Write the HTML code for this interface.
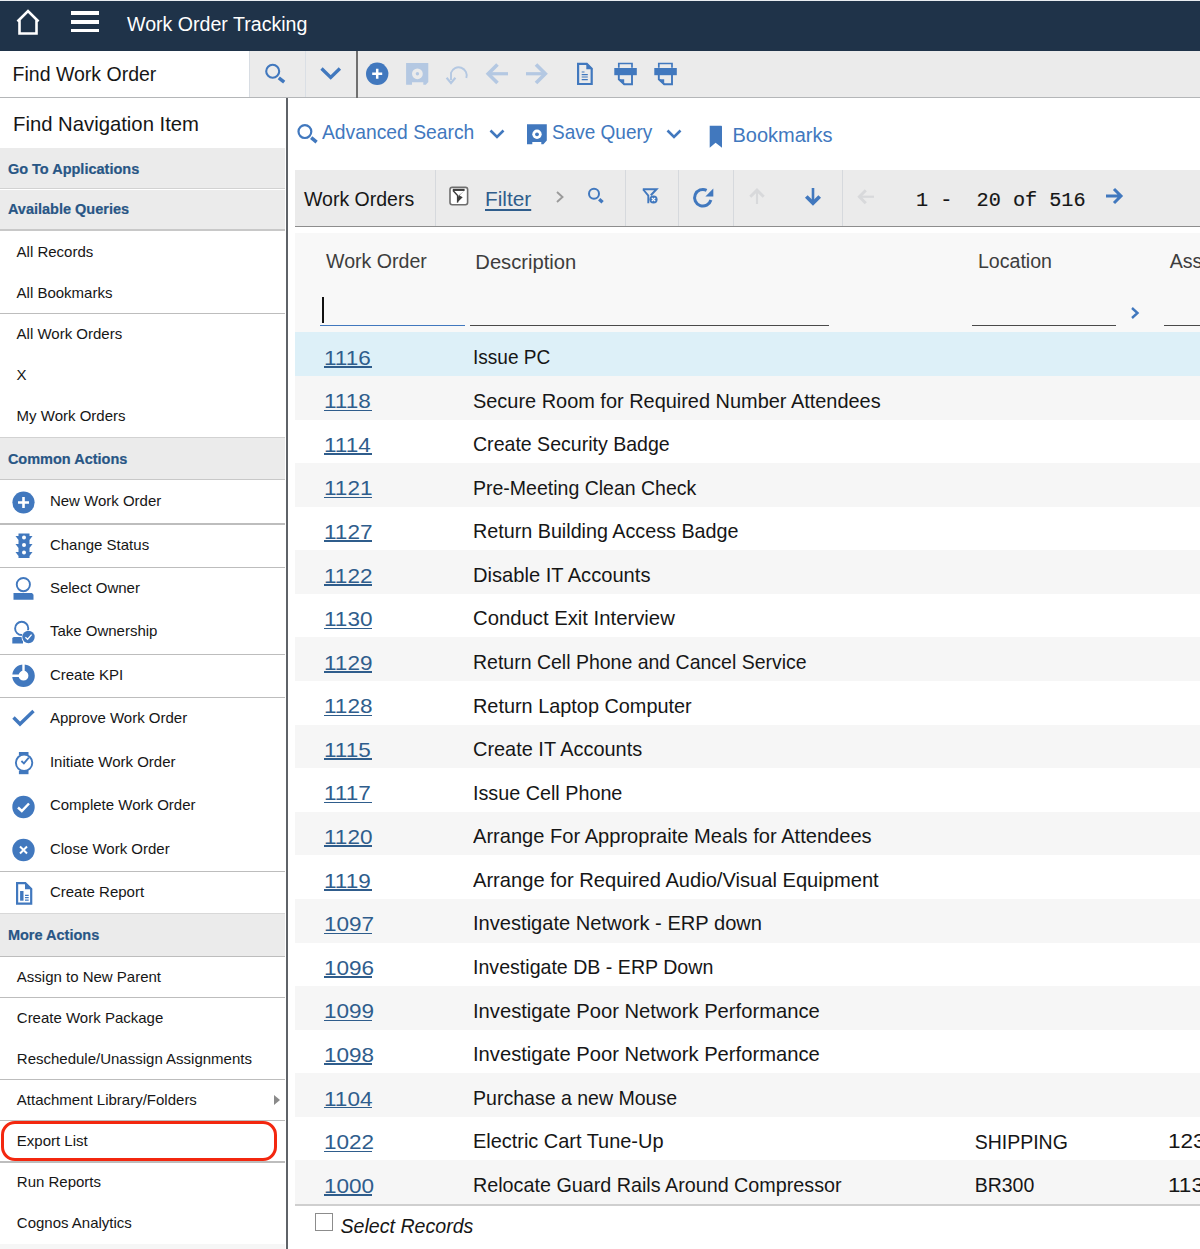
<!DOCTYPE html>
<html><head><meta charset="utf-8"><title>Work Order Tracking</title>
<style>
html,body{margin:0;padding:0;width:1200px;height:1249px;overflow:hidden;background:#fff;}
body{position:relative;font-family:"Liberation Sans", sans-serif;}
.t{position:absolute;white-space:nowrap;}
.r{position:absolute;}
svg.r{overflow:visible;}
</style></head><body>
<div class="r" style="left:0px;top:0px;width:1200px;height:1px;background:#e9edf1;"></div>
<div class="r" style="left:0px;top:1px;width:1200px;height:49.5px;background:#1f3349;"></div>
<svg class="r" style="left:14px;top:8px" width="28" height="30" viewBox="0 0 28 30"><path d="M3.5 13.5 L14 3 L24.5 13.5 M5.5 11.5 V25.5 H22.5 V11.5" fill="none" stroke="#fff" stroke-width="2.6" stroke-linejoin="miter"/></svg>
<div class="r" style="left:71px;top:11px;width:28px;height:3.6px;background:#fff;"></div>
<div class="r" style="left:71px;top:20px;width:28px;height:3.6px;background:#fff;"></div>
<div class="r" style="left:71px;top:28.5px;width:28px;height:3.6px;background:#fff;"></div>
<div class="t " style="left:127px;top:14.61px;font-size:19.6px;line-height:19.6px;color:#ffffff;font-weight:normal;font-style:normal;font-family:'Liberation Sans', sans-serif;">Work Order Tracking</div>
<div class="r" style="left:0px;top:50.5px;width:1200px;height:46.5px;background:#ebebeb;"></div>
<div class="r" style="left:0px;top:97px;width:1200px;height:1.3px;background:#b4b6b8;"></div>
<div class="r" style="left:0px;top:50.5px;width:249px;height:46.5px;background:#ffffff;"></div>
<div class="r" style="left:249px;top:50.5px;width:1px;height:46.5px;background:#d8dde3;"></div>
<div class="r" style="left:305px;top:50.5px;width:1px;height:46.5px;background:#dadfe5;"></div>
<div class="r" style="left:356px;top:50.5px;width:2px;height:47px;background:#707070;"></div>
<div class="t " style="left:12.6px;top:64.99px;font-size:19.5px;line-height:19.5px;color:#161616;font-weight:normal;font-style:normal;font-family:'Liberation Sans', sans-serif;">Find Work Order</div>
<svg class="r" style="left:258px;top:57px" width="32" height="32" viewBox="0 0 32 32"><circle cx="14.7" cy="14.25" r="6.5" fill="none" stroke="#4178be" stroke-width="2.1"/><path d="M20.8 20.9 L26.2 25.1" stroke="#4178be" stroke-width="3.5"/></svg>
<svg class="r" style="left:318px;top:62px" width="26" height="22" viewBox="0 0 26 22"><path d="M3.5 6.5 L12.7 15.5 L21.9 6.5" fill="none" stroke="#4178be" stroke-width="3.3"/></svg>
<svg class="r" style="left:365px;top:62px" width="24" height="24" viewBox="0 0 24 24"><circle cx="12.2" cy="11.8" r="11.2" fill="#4178be"/><path d="M12.2 6.8 V16.8 M7.2 11.8 H17.2" stroke="#fff" stroke-width="2.5"/></svg>
<svg class="r" style="left:400px;top:58px" width="32" height="32" viewBox="0 0 32 32"><path d="M6.1 5 H28.3 V24 L25.8 26.8 H23.3 V24.2 H12 V26.8 H6.1 Z" fill="#b4c8e2"/><circle cx="17.4" cy="15.8" r="5.4" fill="#ebebeb"/><circle cx="17.4" cy="15.8" r="1.7" fill="#b4c8e2"/></svg>
<svg class="r" style="left:440px;top:58px" width="32" height="32" viewBox="0 0 32 32"><path d="M11 22 V14.8 A8 8 0 1 1 26.3 20" fill="none" stroke="#b4c8e2" stroke-width="1.9"/><path d="M6.6 19.8 L11 25 L15.4 19.8" fill="none" stroke="#b4c8e2" stroke-width="2.1"/></svg>
<svg class="r" style="left:480px;top:58px" width="32" height="32" viewBox="0 0 32 32"><path d="M17.5 6.4 L8.2 15.75 L17.5 25.1" fill="none" stroke="#b4c8e2" stroke-width="3.6"/><path d="M8.5 15.75 H28" stroke="#b4c8e2" stroke-width="3.2"/></svg>
<svg class="r" style="left:520px;top:58px" width="32" height="32" viewBox="0 0 32 32"><path d="M16 6.4 L25.3 15.75 L16 25.1" fill="none" stroke="#b4c8e2" stroke-width="3.6"/><path d="M6 15.75 H25" stroke="#b4c8e2" stroke-width="3.2"/></svg>
<svg class="r" style="left:570px;top:58px" width="32" height="32" viewBox="0 0 32 32"><path d="M8.1 5.8 H16.8 L21.7 10.7 V26 H8.1 Z" fill="none" stroke="#4178be" stroke-width="2.2"/><path d="M16.3 4.7 L22.8 11.2 H16.3 Z" fill="#4178be"/><path d="M11.7 14 H14.5 M11.7 16.6 H17.8 M11.7 19 H17.8 M11.7 21.6 H17.8" stroke="#4178be" stroke-width="1.1"/></svg>
<svg class="r" style="left:600px;top:58px" width="40" height="32" viewBox="0 0 40 32"><path d="M18.8 9.8 V5.5 H32 V9.8" fill="none" stroke="#4178be" stroke-width="1.7"/><rect x="14.3" y="10" width="22.5" height="7.2" fill="#4178be"/><path d="M18.8 17 V21.3 L24.2 26.2 H32 V17" fill="none" stroke="#4178be" stroke-width="1.9"/><path d="M18.4 21.3 L24.2 27 V21.3 Z" fill="#4178be"/></svg>
<svg class="r" style="left:640px;top:58px" width="40" height="32" viewBox="0 0 40 32"><path d="M18.8 9.8 V5.5 H32 V9.8" fill="none" stroke="#4178be" stroke-width="1.7"/><rect x="14.3" y="10" width="22.5" height="7.2" fill="#4178be"/><path d="M18.8 17 V21.3 L24.2 26.2 H32 V17" fill="none" stroke="#4178be" stroke-width="1.9"/><path d="M18.4 21.3 L24.2 27 V21.3 Z" fill="#4178be"/></svg>
<div class="r" style="left:286px;top:98px;width:2px;height:1151px;background:#5f6368;"></div>
<div class="t " style="left:13px;top:113.72px;font-size:20.3px;line-height:20.3px;color:#161616;font-weight:normal;font-style:normal;font-family:'Liberation Sans', sans-serif;">Find Navigation Item</div>
<div class="r" style="left:0px;top:148px;width:285px;height:40.5px;background:#ebebeb;"></div>
<div class="t " style="left:7.9px;top:161.63px;font-size:14.5px;line-height:14.5px;color:#285685;font-weight:bold;font-style:normal;font-family:'Liberation Sans', sans-serif;-webkit-text-stroke:0.2px #285685;">Go To Applications</div>
<div class="r" style="left:0px;top:188.3px;width:285px;height:1.2px;background:#d2d2d2;"></div>
<div class="r" style="left:0px;top:189.5px;width:285px;height:40.0px;background:#ebebeb;"></div>
<div class="t " style="left:7.9px;top:202.23px;font-size:14.5px;line-height:14.5px;color:#285685;font-weight:bold;font-style:normal;font-family:'Liberation Sans', sans-serif;-webkit-text-stroke:0.2px #285685;">Available Queries</div>
<div class="r" style="left:0px;top:229.3px;width:285px;height:1.3px;background:#c8c8c8;"></div>
<div class="t " style="left:16.6px;top:243.70px;font-size:15px;line-height:15px;color:#161616;font-weight:normal;font-style:normal;font-family:'Liberation Sans', sans-serif;">All Records</div>
<div class="t " style="left:16.6px;top:285.10px;font-size:15px;line-height:15px;color:#161616;font-weight:normal;font-style:normal;font-family:'Liberation Sans', sans-serif;">All Bookmarks</div>
<div class="t " style="left:16.6px;top:325.80px;font-size:15px;line-height:15px;color:#161616;font-weight:normal;font-style:normal;font-family:'Liberation Sans', sans-serif;">All Work Orders</div>
<div class="t " style="left:16.6px;top:366.70px;font-size:15px;line-height:15px;color:#161616;font-weight:normal;font-style:normal;font-family:'Liberation Sans', sans-serif;">X</div>
<div class="t " style="left:16.6px;top:408.30px;font-size:15px;line-height:15px;color:#161616;font-weight:normal;font-style:normal;font-family:'Liberation Sans', sans-serif;">My Work Orders</div>
<div class="r" style="left:0px;top:313px;width:285px;height:1.3px;background:#bdbdbd;"></div>
<div class="r" style="left:0px;top:437.5px;width:285px;height:41.3px;background:#ebebeb;"></div>
<div class="r" style="left:0px;top:437px;width:285px;height:1.2px;background:#d2d2d2;"></div>
<div class="t " style="left:7.9px;top:451.53px;font-size:14.5px;line-height:14.5px;color:#285685;font-weight:bold;font-style:normal;font-family:'Liberation Sans', sans-serif;-webkit-text-stroke:0.2px #285685;">Common Actions</div>
<div class="r" style="left:0px;top:478.5px;width:285px;height:1.3px;background:#c8c8c8;"></div>
<div class="t " style="left:49.9px;top:493.10px;font-size:15px;line-height:15px;color:#161616;font-weight:normal;font-style:normal;font-family:'Liberation Sans', sans-serif;">New Work Order</div>
<div class="t " style="left:49.9px;top:536.90px;font-size:15px;line-height:15px;color:#161616;font-weight:normal;font-style:normal;font-family:'Liberation Sans', sans-serif;">Change Status</div>
<div class="t " style="left:49.9px;top:580.20px;font-size:15px;line-height:15px;color:#161616;font-weight:normal;font-style:normal;font-family:'Liberation Sans', sans-serif;">Select Owner</div>
<div class="t " style="left:49.9px;top:623.10px;font-size:15px;line-height:15px;color:#161616;font-weight:normal;font-style:normal;font-family:'Liberation Sans', sans-serif;">Take Ownership</div>
<div class="t " style="left:49.9px;top:666.70px;font-size:15px;line-height:15px;color:#161616;font-weight:normal;font-style:normal;font-family:'Liberation Sans', sans-serif;">Create KPI</div>
<div class="t " style="left:49.9px;top:710.30px;font-size:15px;line-height:15px;color:#161616;font-weight:normal;font-style:normal;font-family:'Liberation Sans', sans-serif;">Approve Work Order</div>
<div class="t " style="left:49.9px;top:754.00px;font-size:15px;line-height:15px;color:#161616;font-weight:normal;font-style:normal;font-family:'Liberation Sans', sans-serif;">Initiate Work Order</div>
<div class="t " style="left:49.9px;top:797.30px;font-size:15px;line-height:15px;color:#161616;font-weight:normal;font-style:normal;font-family:'Liberation Sans', sans-serif;">Complete Work Order</div>
<div class="t " style="left:49.9px;top:840.60px;font-size:15px;line-height:15px;color:#161616;font-weight:normal;font-style:normal;font-family:'Liberation Sans', sans-serif;">Close Work Order</div>
<div class="t " style="left:49.9px;top:884.30px;font-size:15px;line-height:15px;color:#161616;font-weight:normal;font-style:normal;font-family:'Liberation Sans', sans-serif;">Create Report</div>
<div class="r" style="left:0px;top:523.4px;width:285px;height:1.3px;background:#bdbdbd;"></div>
<div class="r" style="left:0px;top:566.6999999999999px;width:285px;height:1.3px;background:#bdbdbd;"></div>
<div class="r" style="left:0px;top:653.8px;width:285px;height:1.3px;background:#bdbdbd;"></div>
<div class="r" style="left:0px;top:697.1px;width:285px;height:1.3px;background:#bdbdbd;"></div>
<div class="r" style="left:0px;top:870.9px;width:285px;height:1.3px;background:#bdbdbd;"></div>
<svg class="r" style="left:11px;top:490px" width="25" height="25" viewBox="0 0 25 25"><circle cx="12.5" cy="12.5" r="11.1" fill="#4178be"/><path d="M12.5 7 V18 M7 12.5 H18" stroke="#fff" stroke-width="2.6"/></svg>
<svg class="r" style="left:13px;top:532px" width="22" height="27" viewBox="0 0 22 27"><path d="M5.5 1.5 H16.5 V4 L19.5 4 L16.5 8 V12 L19.5 12 L16.5 16 V20 L19.5 20 L16.5 24 V26 H5.5 V24 L2.5 20 L5.5 20 V16 L2.5 12 L5.5 12 V8 L2.5 4 L5.5 4 Z" fill="#4178be"/><circle cx="11" cy="5.5" r="2" fill="#fff"/><circle cx="11" cy="13" r="2" fill="#fff"/><circle cx="11" cy="20.5" r="2" fill="#fff"/></svg>
<svg class="r" style="left:8px;top:572px" width="32" height="32" viewBox="0 0 32 32"><circle cx="15.35" cy="12.6" r="6.6" fill="none" stroke="#4178be" stroke-width="1.9"/><path d="M5.5 27.7 V21 H24 L25.5 22.8 V27.7 Z" fill="#4178be"/></svg>
<svg class="r" style="left:8px;top:616px" width="32" height="32" viewBox="0 0 32 32"><circle cx="13.7" cy="12.4" r="6.6" fill="none" stroke="#4178be" stroke-width="1.9"/><path d="M4.3 27.5 V22.5 Q4.3 21 6 21 H15 V27.5 Z" fill="#4178be"/><circle cx="20.5" cy="21" r="7" fill="#fff"/><circle cx="20.5" cy="21" r="6.2" fill="#4178be"/><path d="M17.4 21.2 L19.6 23.2 L23.6 18.6" fill="none" stroke="#fff" stroke-width="1.3"/></svg>
<svg class="r" style="left:11px;top:663px" width="25" height="25" viewBox="0 0 25 25"><circle cx="12.5" cy="12.7" r="8.1" fill="none" stroke="#4178be" stroke-width="6.4"/><path d="M12.5 0.5 V8.5 M0.5 12.7 H8.5" stroke="#fff" stroke-width="2.4"/></svg>
<svg class="r" style="left:11px;top:707px" width="25" height="22" viewBox="0 0 25 22"><path d="M2.5 10.5 L9 17 L22.5 4" fill="none" stroke="#4178be" stroke-width="3.4"/></svg>
<svg class="r" style="left:8px;top:748px" width="32" height="32" viewBox="0 0 32 32"><rect x="10.9" y="4" width="9.6" height="3.5" fill="#4178be"/><rect x="10.9" y="22.6" width="9.6" height="3.6" fill="#4178be"/><circle cx="16.1" cy="14.8" r="8.2" fill="#fff" stroke="#4178be" stroke-width="1.9"/><path d="M13.4 13 L15.9 15.4 L20.8 9.6" fill="none" stroke="#4178be" stroke-width="1.8"/></svg>
<svg class="r" style="left:11px;top:795px" width="25" height="24" viewBox="0 0 25 24"><circle cx="12.5" cy="12" r="11.2" fill="#4178be"/><path d="M7 12.5 L10.8 16 L18 8.5" fill="none" stroke="#fff" stroke-width="2.5"/></svg>
<svg class="r" style="left:11px;top:838px" width="25" height="24" viewBox="0 0 25 24"><circle cx="12.5" cy="12" r="11.2" fill="#4178be"/><path d="M9 8.5 L16 15.5 M16 8.5 L9 15.5" stroke="#fff" stroke-width="2"/></svg>
<svg class="r" style="left:8px;top:878px" width="32" height="32" viewBox="0 0 32 32"><path d="M9.1 5.1 H17.3 L23.2 11 V25.6 H9.1 Z" fill="none" stroke="#4178be" stroke-width="2.2"/><path d="M17 4 L24.3 11.3 H17 Z" fill="#4178be"/><rect x="12.1" y="13" width="3.4" height="9.7" fill="#4178be"/><path d="M17 17.3 H20.7 M17 19.7 H20.7 M17 22.2 H20.7" stroke="#4178be" stroke-width="1.2"/></svg>
<div class="r" style="left:0px;top:913px;width:285px;height:43.5px;background:#ebebeb;"></div>
<div class="r" style="left:0px;top:912.6px;width:285px;height:1px;background:#d8d8d8;"></div>
<div class="t " style="left:7.9px;top:927.53px;font-size:14.5px;line-height:14.5px;color:#285685;font-weight:bold;font-style:normal;font-family:'Liberation Sans', sans-serif;-webkit-text-stroke:0.2px #285685;">More Actions</div>
<div class="r" style="left:0px;top:956px;width:285px;height:1.4px;background:#bdbdbd;"></div>
<div class="t " style="left:16.8px;top:969.20px;font-size:15px;line-height:15px;color:#161616;font-weight:normal;font-style:normal;font-family:'Liberation Sans', sans-serif;">Assign to New Parent</div>
<div class="t " style="left:16.8px;top:1009.90px;font-size:15px;line-height:15px;color:#161616;font-weight:normal;font-style:normal;font-family:'Liberation Sans', sans-serif;">Create Work Package</div>
<div class="t " style="left:16.8px;top:1051.10px;font-size:15px;line-height:15px;color:#161616;font-weight:normal;font-style:normal;font-family:'Liberation Sans', sans-serif;">Reschedule/Unassign Assignments</div>
<div class="t " style="left:16.8px;top:1091.80px;font-size:15px;line-height:15px;color:#161616;font-weight:normal;font-style:normal;font-family:'Liberation Sans', sans-serif;">Attachment Library/Folders</div>
<div class="t " style="left:16.8px;top:1133.30px;font-size:15px;line-height:15px;color:#161616;font-weight:normal;font-style:normal;font-family:'Liberation Sans', sans-serif;">Export List</div>
<div class="t " style="left:16.8px;top:1174.40px;font-size:15px;line-height:15px;color:#161616;font-weight:normal;font-style:normal;font-family:'Liberation Sans', sans-serif;">Run Reports</div>
<div class="t " style="left:16.8px;top:1215.10px;font-size:15px;line-height:15px;color:#161616;font-weight:normal;font-style:normal;font-family:'Liberation Sans', sans-serif;">Cognos Analytics</div>
<div class="r" style="left:0px;top:996.8px;width:285px;height:1.3px;background:#bdbdbd;"></div>
<div class="r" style="left:0px;top:1078.7px;width:285px;height:1.3px;background:#bdbdbd;"></div>
<div class="r" style="left:0px;top:1119.9px;width:285px;height:1.3px;background:#bdbdbd;"></div>
<div class="r" style="left:0px;top:1161.4px;width:285px;height:1.3px;background:#bdbdbd;"></div>
<svg class="r" style="left:272px;top:1093px" width="10" height="14" viewBox="0 0 10 14"><path d="M2 2 L8 7 L2 12 Z" fill="#8a8a8a"/></svg>
<div class="r" style="left:0px;top:1243.5px;width:285px;height:6px;background:#f6f6f6;"></div>
<div class="r" style="left:0.5px;top:1121px;width:270.5px;height:34px;border:3px solid #f3270f;border-radius:14px;"></div>
<svg class="r" style="left:290px;top:118px" width="32" height="32" viewBox="0 0 32 32"><circle cx="14.9" cy="13.6" r="6.4" fill="none" stroke="#4178be" stroke-width="2.2"/><path d="M21.2 19.6 L26.6 24.1" stroke="#4178be" stroke-width="3.5"/></svg>
<div class="t " style="left:322px;top:122.64px;font-size:19.8px;line-height:19.8px;color:#4178be;font-weight:normal;font-style:normal;font-family:'Liberation Sans', sans-serif;transform:scaleX(0.975);transform-origin:0 0;">Advanced Search</div>
<svg class="r" style="left:488px;top:126px" width="18" height="16" viewBox="0 0 18 16"><path d="M2.5 4.5 L9 11 L15.5 4.5" fill="none" stroke="#4178be" stroke-width="2.6"/></svg>
<svg class="r" style="left:520px;top:118px" width="32" height="32" viewBox="0 0 32 32"><path d="M7 6.2 H26.8 V22.5 L23.4 26.3 H21.3 V24 H12.3 V26.3 H7 Z" fill="#4178be"/><circle cx="17" cy="16.3" r="4.7" fill="#fff"/><circle cx="17" cy="16.3" r="1.9" fill="#4178be"/></svg>
<div class="t " style="left:551.6px;top:122.64px;font-size:19.8px;line-height:19.8px;color:#4178be;font-weight:normal;font-style:normal;font-family:'Liberation Sans', sans-serif;transform:scaleX(0.96);transform-origin:0 0;">Save Query</div>
<svg class="r" style="left:665px;top:126px" width="18" height="16" viewBox="0 0 18 16"><path d="M2.5 4.5 L9 11 L15.5 4.5" fill="none" stroke="#4178be" stroke-width="2.6"/></svg>
<svg class="r" style="left:707px;top:124px" width="17" height="26" viewBox="0 0 17 26"><path d="M2.7 1.8 H14.3 Q15 1.8 15 2.8 V23.8 L8.6 18.8 L2.7 23.8 Z" fill="#4178be"/></svg>
<div class="t " style="left:732.5px;top:125.07px;font-size:20px;line-height:20px;color:#4178be;font-weight:normal;font-style:normal;font-family:'Liberation Sans', sans-serif;">Bookmarks</div>
<div class="r" style="left:295px;top:170px;width:905px;height:56px;background:#ebebeb;"></div>
<div class="r" style="left:295px;top:225.6px;width:905px;height:1.4px;background:#8d8d8d;"></div>
<div class="r" style="left:434.5px;top:170px;width:1px;height:56px;background:#d6d9dd;"></div>
<div class="r" style="left:625px;top:170px;width:1px;height:56px;background:#d6d9dd;"></div>
<div class="r" style="left:678.3px;top:170px;width:1px;height:56px;background:#d6d9dd;"></div>
<div class="r" style="left:732.7px;top:170px;width:1px;height:56px;background:#d6d9dd;"></div>
<div class="r" style="left:842.4px;top:170px;width:1px;height:56px;background:#d6d9dd;"></div>
<div class="t " style="left:304px;top:189.69px;font-size:19.5px;line-height:19.5px;color:#161616;font-weight:normal;font-style:normal;font-family:'Liberation Sans', sans-serif;">Work Orders</div>
<svg class="r" style="left:448px;top:186px" width="22" height="22" viewBox="0 0 22 22"><rect x="2" y="1.4" width="17.6" height="17.4" rx="2.2" fill="#fff" stroke="#6e6e6e" stroke-width="1.6"/><path d="M4.8 3.9 H16.6" stroke="#3d3d3d" stroke-width="2.1"/><path d="M5 4.5 L9.6 9.6 V16.6" fill="none" stroke="#3d3d3d" stroke-width="1.4"/><path d="M16.6 4.5 L11.4 9.6 L14.7 11.2 L8.8 17 L10.4 9.8 Z" fill="#3d3d3d"/></svg>
<div class="t " style="left:485px;top:188.59px;font-size:20.8px;line-height:20.8px;color:#2f5d8c;font-weight:normal;font-style:normal;font-family:'Liberation Sans', sans-serif;text-decoration:underline;text-underline-offset:3px;text-decoration-thickness:1.6px;">Filter</div>
<svg class="r" style="left:554px;top:190px" width="12" height="14" viewBox="0 0 12 14"><path d="M3 2 L8.5 7 L3 12" fill="none" stroke="#9a9a9a" stroke-width="1.9"/></svg>
<svg class="r" style="left:582px;top:183px" width="32" height="32" viewBox="0 0 32 32"><circle cx="12" cy="10.75" r="5" fill="none" stroke="#4178be" stroke-width="2"/><path d="M17.2 16.3 L20.6 19.3" stroke="#4178be" stroke-width="3.4"/></svg>
<svg class="r" style="left:640px;top:186px" width="20" height="20" viewBox="0 0 20 20"><path d="M2.8 3.3 H16.5 L10.8 9.2" fill="none" stroke="#4178be" stroke-width="2"/><path d="M3.2 3.5 L8.3 9.6 V17.3" fill="none" stroke="#4178be" stroke-width="1.9"/><circle cx="13.5" cy="13.5" r="4.1" fill="#4178be"/><path d="M11.8 11.8 L15.2 15.2 M15.2 11.8 L11.8 15.2" stroke="#fff" stroke-width="1.2"/></svg>
<svg class="r" style="left:690px;top:185px" width="26" height="26" viewBox="0 0 26 26"><path d="M16.6 5.3 A8.3 8.3 0 1 0 20.9 15.0" fill="none" stroke="#4178be" stroke-width="3"/><path d="M15.4 11.6 L23.3 3.4 V11.6 Z" fill="#4178be"/></svg>
<svg class="r" style="left:748px;top:188px" width="18" height="18" viewBox="0 0 18 18"><path d="M9 2.5 V16" fill="none" stroke="#d8d9db" stroke-width="2.2"/><path d="M2.3 8.8 L9 2.2 L15.7 8.8" fill="none" stroke="#d8d9db" stroke-width="3"/></svg>
<svg class="r" style="left:804px;top:186px" width="18" height="20" viewBox="0 0 18 20"><path d="M9 2 V16" fill="none" stroke="#4178be" stroke-width="2.6"/><path d="M2.3 10.5 L9 17 L15.7 10.5" fill="none" stroke="#4178be" stroke-width="3.8"/></svg>
<svg class="r" style="left:857px;top:188px" width="19" height="18" viewBox="0 0 19 18"><path d="M8.8 2.2 L2.4 8.7 L8.8 15.2" fill="none" stroke="#d8d9db" stroke-width="3"/><path d="M3 8.7 H17" stroke="#d8d9db" stroke-width="2.2"/></svg>
<div class="t " style="left:916px;top:191.40px;font-size:20.2px;line-height:20.2px;color:#161616;font-weight:normal;font-style:normal;font-family:'Liberation Mono', monospace;white-space:pre;-webkit-text-stroke:0.15px #161616;">1 -&nbsp;&nbsp;20 of 516</div>
<svg class="r" style="left:1104px;top:187px" width="20" height="18" viewBox="0 0 20 18"><path d="M10 2 L17 9 L10 16 M17 9 H2" fill="none" stroke="#4178be" stroke-width="3"/></svg>
<div class="r" style="left:295px;top:233px;width:905px;height:99.5px;background:#f8f8f8;"></div>
<div class="t " style="left:326px;top:252.41px;font-size:19.6px;line-height:19.6px;color:#3d3d3d;font-weight:normal;font-style:normal;font-family:'Liberation Sans', sans-serif;">Work Order</div>
<div class="t " style="left:475.3px;top:251.90px;font-size:20.2px;line-height:20.2px;color:#3d3d3d;font-weight:normal;font-style:normal;font-family:'Liberation Sans', sans-serif;">Description</div>
<div class="t " style="left:977.9px;top:252.21px;font-size:19.6px;line-height:19.6px;color:#3d3d3d;font-weight:normal;font-style:normal;font-family:'Liberation Sans', sans-serif;">Location</div>
<div class="t " style="left:1169.7px;top:252.21px;font-size:19.6px;line-height:19.6px;color:#3d3d3d;font-weight:normal;font-style:normal;font-family:'Liberation Sans', sans-serif;">Asset</div>
<div class="r" style="left:322.3px;top:297px;width:2px;height:25.5px;background:#111111;"></div>
<div class="r" style="left:320px;top:324.8px;width:145px;height:1.6px;background:#4178be;"></div>
<div class="r" style="left:470px;top:325.1px;width:359px;height:1.4px;background:#4a4a4a;"></div>
<div class="r" style="left:972px;top:325.1px;width:144px;height:1.4px;background:#4a4a4a;"></div>
<div class="r" style="left:1164.3px;top:325.1px;width:40px;height:1.4px;background:#4a4a4a;"></div>
<svg class="r" style="left:1128px;top:305px" width="14" height="16" viewBox="0 0 14 16"><path d="M4 3 L9.5 8 L4 13" fill="none" stroke="#4178be" stroke-width="2.4"/></svg>
<div class="r" style="left:295px;top:332.4px;width:905px;height:43.6px;background:#ddf0f8;"></div>
<div class="t " style="left:323.6px;top:348.64px;font-size:19.8px;line-height:19.8px;color:#2f5d8c;font-weight:normal;font-style:normal;font-family:'Liberation Sans', sans-serif;transform:scaleX(1.14);transform-origin:0 0;">1116</div>
<div class="r" style="left:324px;top:366.1px;width:47.7px;height:1.5px;background:#2f5d8c;"></div>
<div class="t " style="left:472.7px;top:347.94px;font-size:19.8px;line-height:19.8px;color:#161616;font-weight:normal;font-style:normal;font-family:'Liberation Sans', sans-serif;transform:scaleX(0.9626);transform-origin:0 0;">Issue PC</div>
<div class="r" style="left:295px;top:375.98px;width:905px;height:43.6px;background:#f6f6f6;"></div>
<div class="t " style="left:323.6px;top:392.22px;font-size:19.8px;line-height:19.8px;color:#2f5d8c;font-weight:normal;font-style:normal;font-family:'Liberation Sans', sans-serif;transform:scaleX(1.14);transform-origin:0 0;">1118</div>
<div class="r" style="left:324px;top:409.68px;width:47.7px;height:1.5px;background:#2f5d8c;"></div>
<div class="t " style="left:472.7px;top:391.52px;font-size:19.8px;line-height:19.8px;color:#161616;font-weight:normal;font-style:normal;font-family:'Liberation Sans', sans-serif;transform:scaleX(1.0074);transform-origin:0 0;">Secure Room for Required Number Attendees</div>
<div class="r" style="left:295px;top:419.56px;width:905px;height:43.6px;background:#ffffff;"></div>
<div class="t " style="left:323.6px;top:435.80px;font-size:19.8px;line-height:19.8px;color:#2f5d8c;font-weight:normal;font-style:normal;font-family:'Liberation Sans', sans-serif;transform:scaleX(1.14);transform-origin:0 0;">1114</div>
<div class="r" style="left:324px;top:453.26px;width:47.7px;height:1.5px;background:#2f5d8c;"></div>
<div class="t " style="left:472.7px;top:435.10px;font-size:19.8px;line-height:19.8px;color:#161616;font-weight:normal;font-style:normal;font-family:'Liberation Sans', sans-serif;transform:scaleX(0.9885);transform-origin:0 0;">Create Security Badge</div>
<div class="r" style="left:295px;top:463.14px;width:905px;height:43.6px;background:#f6f6f6;"></div>
<div class="t " style="left:323.6px;top:479.38px;font-size:19.8px;line-height:19.8px;color:#2f5d8c;font-weight:normal;font-style:normal;font-family:'Liberation Sans', sans-serif;transform:scaleX(1.14);transform-origin:0 0;">1121</div>
<div class="r" style="left:324px;top:496.84px;width:47.7px;height:1.5px;background:#2f5d8c;"></div>
<div class="t " style="left:472.7px;top:478.68px;font-size:19.8px;line-height:19.8px;color:#161616;font-weight:normal;font-style:normal;font-family:'Liberation Sans', sans-serif;transform:scaleX(0.9859);transform-origin:0 0;">Pre-Meeting Clean Check</div>
<div class="r" style="left:295px;top:506.72px;width:905px;height:43.6px;background:#ffffff;"></div>
<div class="t " style="left:323.6px;top:522.96px;font-size:19.8px;line-height:19.8px;color:#2f5d8c;font-weight:normal;font-style:normal;font-family:'Liberation Sans', sans-serif;transform:scaleX(1.14);transform-origin:0 0;">1127</div>
<div class="r" style="left:324px;top:540.42px;width:47.7px;height:1.5px;background:#2f5d8c;"></div>
<div class="t " style="left:472.7px;top:522.26px;font-size:19.8px;line-height:19.8px;color:#161616;font-weight:normal;font-style:normal;font-family:'Liberation Sans', sans-serif;transform:scaleX(0.9977);transform-origin:0 0;">Return Building Access Badge</div>
<div class="r" style="left:295px;top:550.3px;width:905px;height:43.6px;background:#f6f6f6;"></div>
<div class="t " style="left:323.6px;top:566.54px;font-size:19.8px;line-height:19.8px;color:#2f5d8c;font-weight:normal;font-style:normal;font-family:'Liberation Sans', sans-serif;transform:scaleX(1.14);transform-origin:0 0;">1122</div>
<div class="r" style="left:324px;top:584.0px;width:47.7px;height:1.5px;background:#2f5d8c;"></div>
<div class="t " style="left:472.7px;top:565.84px;font-size:19.8px;line-height:19.8px;color:#161616;font-weight:normal;font-style:normal;font-family:'Liberation Sans', sans-serif;transform:scaleX(1.0172);transform-origin:0 0;">Disable IT Accounts</div>
<div class="r" style="left:295px;top:593.88px;width:905px;height:43.6px;background:#ffffff;"></div>
<div class="t " style="left:323.6px;top:610.12px;font-size:19.8px;line-height:19.8px;color:#2f5d8c;font-weight:normal;font-style:normal;font-family:'Liberation Sans', sans-serif;transform:scaleX(1.14);transform-origin:0 0;">1130</div>
<div class="r" style="left:324px;top:627.58px;width:47.7px;height:1.5px;background:#2f5d8c;"></div>
<div class="t " style="left:472.7px;top:609.42px;font-size:19.8px;line-height:19.8px;color:#161616;font-weight:normal;font-style:normal;font-family:'Liberation Sans', sans-serif;transform:scaleX(1.0253);transform-origin:0 0;">Conduct Exit Interview</div>
<div class="r" style="left:295px;top:637.46px;width:905px;height:43.6px;background:#f6f6f6;"></div>
<div class="t " style="left:323.6px;top:653.70px;font-size:19.8px;line-height:19.8px;color:#2f5d8c;font-weight:normal;font-style:normal;font-family:'Liberation Sans', sans-serif;transform:scaleX(1.14);transform-origin:0 0;">1129</div>
<div class="r" style="left:324px;top:671.16px;width:47.7px;height:1.5px;background:#2f5d8c;"></div>
<div class="t " style="left:472.7px;top:653.00px;font-size:19.8px;line-height:19.8px;color:#161616;font-weight:normal;font-style:normal;font-family:'Liberation Sans', sans-serif;transform:scaleX(0.9852);transform-origin:0 0;">Return Cell Phone and Cancel Service</div>
<div class="r" style="left:295px;top:681.04px;width:905px;height:43.6px;background:#ffffff;"></div>
<div class="t " style="left:323.6px;top:697.28px;font-size:19.8px;line-height:19.8px;color:#2f5d8c;font-weight:normal;font-style:normal;font-family:'Liberation Sans', sans-serif;transform:scaleX(1.14);transform-origin:0 0;">1128</div>
<div class="r" style="left:324px;top:714.74px;width:47.7px;height:1.5px;background:#2f5d8c;"></div>
<div class="t " style="left:472.7px;top:696.58px;font-size:19.8px;line-height:19.8px;color:#161616;font-weight:normal;font-style:normal;font-family:'Liberation Sans', sans-serif;transform:scaleX(1.0046);transform-origin:0 0;">Return Laptop Computer</div>
<div class="r" style="left:295px;top:724.62px;width:905px;height:43.6px;background:#f6f6f6;"></div>
<div class="t " style="left:323.6px;top:740.86px;font-size:19.8px;line-height:19.8px;color:#2f5d8c;font-weight:normal;font-style:normal;font-family:'Liberation Sans', sans-serif;transform:scaleX(1.14);transform-origin:0 0;">1115</div>
<div class="r" style="left:324px;top:758.32px;width:47.7px;height:1.5px;background:#2f5d8c;"></div>
<div class="t " style="left:472.7px;top:740.16px;font-size:19.8px;line-height:19.8px;color:#161616;font-weight:normal;font-style:normal;font-family:'Liberation Sans', sans-serif;transform:scaleX(1.0077);transform-origin:0 0;">Create IT Accounts</div>
<div class="r" style="left:295px;top:768.2px;width:905px;height:43.6px;background:#ffffff;"></div>
<div class="t " style="left:323.6px;top:784.44px;font-size:19.8px;line-height:19.8px;color:#2f5d8c;font-weight:normal;font-style:normal;font-family:'Liberation Sans', sans-serif;transform:scaleX(1.14);transform-origin:0 0;">1117</div>
<div class="r" style="left:324px;top:801.9px;width:47.7px;height:1.5px;background:#2f5d8c;"></div>
<div class="t " style="left:472.7px;top:783.74px;font-size:19.8px;line-height:19.8px;color:#161616;font-weight:normal;font-style:normal;font-family:'Liberation Sans', sans-serif;transform:scaleX(0.9987);transform-origin:0 0;">Issue Cell Phone</div>
<div class="r" style="left:295px;top:811.78px;width:905px;height:43.6px;background:#f6f6f6;"></div>
<div class="t " style="left:323.6px;top:828.02px;font-size:19.8px;line-height:19.8px;color:#2f5d8c;font-weight:normal;font-style:normal;font-family:'Liberation Sans', sans-serif;transform:scaleX(1.14);transform-origin:0 0;">1120</div>
<div class="r" style="left:324px;top:845.48px;width:47.7px;height:1.5px;background:#2f5d8c;"></div>
<div class="t " style="left:472.7px;top:827.32px;font-size:19.8px;line-height:19.8px;color:#161616;font-weight:normal;font-style:normal;font-family:'Liberation Sans', sans-serif;transform:scaleX(1.0155);transform-origin:0 0;">Arrange For Appropraite Meals for Attendees</div>
<div class="r" style="left:295px;top:855.36px;width:905px;height:43.6px;background:#ffffff;"></div>
<div class="t " style="left:323.6px;top:871.60px;font-size:19.8px;line-height:19.8px;color:#2f5d8c;font-weight:normal;font-style:normal;font-family:'Liberation Sans', sans-serif;transform:scaleX(1.14);transform-origin:0 0;">1119</div>
<div class="r" style="left:324px;top:889.06px;width:47.7px;height:1.5px;background:#2f5d8c;"></div>
<div class="t " style="left:472.7px;top:870.90px;font-size:19.8px;line-height:19.8px;color:#161616;font-weight:normal;font-style:normal;font-family:'Liberation Sans', sans-serif;transform:scaleX(1.0173);transform-origin:0 0;">Arrange for Required Audio/Visual Equipment</div>
<div class="r" style="left:295px;top:898.94px;width:905px;height:43.6px;background:#f6f6f6;"></div>
<div class="t " style="left:323.6px;top:915.18px;font-size:19.8px;line-height:19.8px;color:#2f5d8c;font-weight:normal;font-style:normal;font-family:'Liberation Sans', sans-serif;transform:scaleX(1.14);transform-origin:0 0;">1097</div>
<div class="r" style="left:324px;top:932.64px;width:47.7px;height:1.5px;background:#2f5d8c;"></div>
<div class="t " style="left:472.7px;top:914.48px;font-size:19.8px;line-height:19.8px;color:#161616;font-weight:normal;font-style:normal;font-family:'Liberation Sans', sans-serif;transform:scaleX(1.0162);transform-origin:0 0;">Investigate Network - ERP down</div>
<div class="r" style="left:295px;top:942.52px;width:905px;height:43.6px;background:#ffffff;"></div>
<div class="t " style="left:323.6px;top:958.76px;font-size:19.8px;line-height:19.8px;color:#2f5d8c;font-weight:normal;font-style:normal;font-family:'Liberation Sans', sans-serif;transform:scaleX(1.14);transform-origin:0 0;">1096</div>
<div class="r" style="left:324px;top:976.22px;width:47.7px;height:1.5px;background:#2f5d8c;"></div>
<div class="t " style="left:472.7px;top:958.06px;font-size:19.8px;line-height:19.8px;color:#161616;font-weight:normal;font-style:normal;font-family:'Liberation Sans', sans-serif;transform:scaleX(0.9905);transform-origin:0 0;">Investigate DB - ERP Down</div>
<div class="r" style="left:295px;top:986.1px;width:905px;height:43.6px;background:#f6f6f6;"></div>
<div class="t " style="left:323.6px;top:1002.34px;font-size:19.8px;line-height:19.8px;color:#2f5d8c;font-weight:normal;font-style:normal;font-family:'Liberation Sans', sans-serif;transform:scaleX(1.14);transform-origin:0 0;">1099</div>
<div class="r" style="left:324px;top:1019.8px;width:47.7px;height:1.5px;background:#2f5d8c;"></div>
<div class="t " style="left:472.7px;top:1001.64px;font-size:19.8px;line-height:19.8px;color:#161616;font-weight:normal;font-style:normal;font-family:'Liberation Sans', sans-serif;transform:scaleX(1.0206);transform-origin:0 0;">Investigate Poor Network Performance</div>
<div class="r" style="left:295px;top:1029.68px;width:905px;height:43.6px;background:#ffffff;"></div>
<div class="t " style="left:323.6px;top:1045.92px;font-size:19.8px;line-height:19.8px;color:#2f5d8c;font-weight:normal;font-style:normal;font-family:'Liberation Sans', sans-serif;transform:scaleX(1.14);transform-origin:0 0;">1098</div>
<div class="r" style="left:324px;top:1063.38px;width:47.7px;height:1.5px;background:#2f5d8c;"></div>
<div class="t " style="left:472.7px;top:1045.22px;font-size:19.8px;line-height:19.8px;color:#161616;font-weight:normal;font-style:normal;font-family:'Liberation Sans', sans-serif;transform:scaleX(1.0206);transform-origin:0 0;">Investigate Poor Network Performance</div>
<div class="r" style="left:295px;top:1073.26px;width:905px;height:43.6px;background:#f6f6f6;"></div>
<div class="t " style="left:323.6px;top:1089.50px;font-size:19.8px;line-height:19.8px;color:#2f5d8c;font-weight:normal;font-style:normal;font-family:'Liberation Sans', sans-serif;transform:scaleX(1.14);transform-origin:0 0;">1104</div>
<div class="r" style="left:324px;top:1106.96px;width:47.7px;height:1.5px;background:#2f5d8c;"></div>
<div class="t " style="left:472.7px;top:1088.80px;font-size:19.8px;line-height:19.8px;color:#161616;font-weight:normal;font-style:normal;font-family:'Liberation Sans', sans-serif;transform:scaleX(0.9874);transform-origin:0 0;">Purchase a new Mouse</div>
<div class="r" style="left:295px;top:1116.84px;width:905px;height:43.6px;background:#ffffff;"></div>
<div class="t " style="left:323.6px;top:1133.08px;font-size:19.8px;line-height:19.8px;color:#2f5d8c;font-weight:normal;font-style:normal;font-family:'Liberation Sans', sans-serif;transform:scaleX(1.14);transform-origin:0 0;">1022</div>
<div class="r" style="left:324px;top:1150.54px;width:47.7px;height:1.5px;background:#2f5d8c;"></div>
<div class="t " style="left:472.7px;top:1132.38px;font-size:19.8px;line-height:19.8px;color:#161616;font-weight:normal;font-style:normal;font-family:'Liberation Sans', sans-serif;transform:scaleX(1.0074);transform-origin:0 0;">Electric Cart Tune-Up</div>
<div class="t " style="left:974.7px;top:1132.63px;font-size:19.5px;line-height:19.5px;color:#161616;font-weight:normal;font-style:normal;font-family:'Liberation Sans', sans-serif;">SHIPPING</div>
<div class="t " style="left:1167.5px;top:1132.38px;font-size:19.8px;line-height:19.8px;color:#161616;font-weight:normal;font-style:normal;font-family:'Liberation Sans', sans-serif;transform:scaleX(1.14);transform-origin:0 0;">123</div>
<div class="r" style="left:295px;top:1160.42px;width:905px;height:43.6px;background:#f6f6f6;"></div>
<div class="t " style="left:323.6px;top:1176.66px;font-size:19.8px;line-height:19.8px;color:#2f5d8c;font-weight:normal;font-style:normal;font-family:'Liberation Sans', sans-serif;transform:scaleX(1.14);transform-origin:0 0;">1000</div>
<div class="r" style="left:324px;top:1194.12px;width:47.7px;height:1.5px;background:#2f5d8c;"></div>
<div class="t " style="left:472.7px;top:1175.96px;font-size:19.8px;line-height:19.8px;color:#161616;font-weight:normal;font-style:normal;font-family:'Liberation Sans', sans-serif;transform:scaleX(0.9978);transform-origin:0 0;">Relocate Guard Rails Around Compressor</div>
<div class="t " style="left:974.7px;top:1176.21px;font-size:19.5px;line-height:19.5px;color:#161616;font-weight:normal;font-style:normal;font-family:'Liberation Sans', sans-serif;">BR300</div>
<div class="t " style="left:1167.5px;top:1175.96px;font-size:19.8px;line-height:19.8px;color:#161616;font-weight:normal;font-style:normal;font-family:'Liberation Sans', sans-serif;transform:scaleX(1.14);transform-origin:0 0;">113</div>
<div class="r" style="left:295px;top:1204px;width:905px;height:1.5px;background:#cfcfcf;"></div>
<div class="r" style="left:315px;top:1213px;width:16px;height:16px;border:1.2px solid #8c8c8c;background:#fff"></div>
<div class="t " style="left:340.5px;top:1217.41px;font-size:19.6px;line-height:19.6px;color:#161616;font-weight:normal;font-style:italic;font-family:'Liberation Sans', sans-serif;">Select Records</div>
</body></html>
